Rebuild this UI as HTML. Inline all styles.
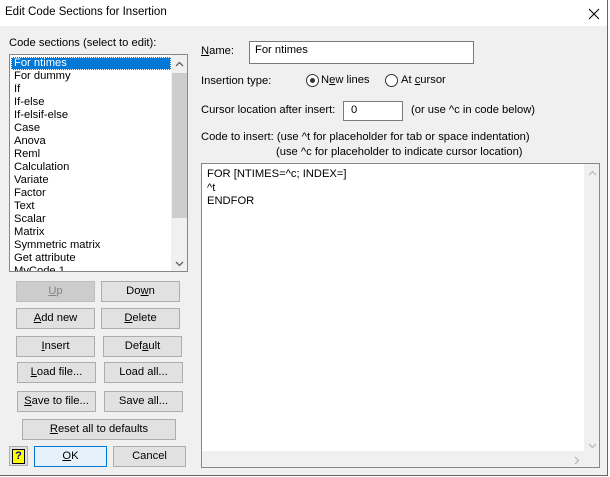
<!DOCTYPE html><html><head><style>
body{margin:0;width:610px;height:477px;background:#fff;font-family:"Liberation Sans",sans-serif;font-size:11.2px;color:#000;position:relative;overflow:hidden}
.a{position:absolute}
.win{left:0;top:0;width:607px;height:475px;background:#f0f0f0;border-right:1px solid #666;border-bottom:1px solid #666}
.title{left:0;top:0;width:607px;height:26px;background:#fff}
.btn{position:absolute;background:#e1e1e1;border:1px solid #adadad;box-sizing:border-box;text-align:center;line-height:19px}
.lb div{height:13px;line-height:13px;padding-left:3px}
.inp{position:absolute;background:#fff;border:1px solid #7a7a7a;box-sizing:border-box}
</style></head><body>
<div class="a win"></div>
<div class="a title"></div>
<div class="a" style="left:5px;top:6px;font-size:11.5px">Edit Code Sections for Insertion</div>
<svg class="a" style="left:588px;top:8px" width="12" height="12"><path d="M1 1L11 11M11 1L1 11" stroke="#000" stroke-width="1.1"/></svg>
<div class="a" style="left:9px;top:37px">Code sections (select to edit):</div>
<div class="a" style="left:9px;top:54px;width:179px;height:218px;background:#fff;border:1px solid #828790;box-sizing:border-box;overflow:hidden">
<div class="lb" style="position:absolute;left:1px;top:2px;width:160px">
<div style="background:#0078d7;color:#fff;outline:1px dotted #fff;outline-offset:-1px">For ntimes</div><div>For dummy</div><div>If</div><div>If-else</div><div>If-elsif-else</div><div>Case</div><div>Anova</div><div>Reml</div><div>Calculation</div><div>Variate</div><div>Factor</div><div>Text</div><div>Scalar</div><div>Matrix</div><div>Symmetric matrix</div><div>Get attribute</div><div>MyCode 1</div></div>
<div class="a" style="left:161px;top:0;width:17px;height:216px;background:#f0f0f0"></div>
<div class="a" style="left:162px;top:18px;width:15px;height:145px;background:#cdcdcd"></div>
<svg class="a" style="left:165px;top:6px" width="9" height="6"><path d="M1 5L4.5 1.5L8 5" stroke="#606060" stroke-width="1.3" fill="none"/></svg>
<svg class="a" style="left:165px;top:206px" width="9" height="6"><path d="M1 1L4.5 4.5L8 1" stroke="#606060" stroke-width="1.3" fill="none"/></svg>
</div>
<div class="btn" style="left:16px;top:281px;width:79px;height:21px;background:#cccccc;border-color:#bfbfbf;color:#838383"><u>U</u>p</div>
<div class="btn" style="left:101px;top:281px;width:79px;height:21px">Do<u>w</u>n</div>
<div class="btn" style="left:16px;top:308px;width:79px;height:21px"><u>A</u>dd new</div>
<div class="btn" style="left:101px;top:308px;width:79px;height:21px"><u>D</u>elete</div>
<div class="btn" style="left:16px;top:336px;width:79px;height:21px"><u>I</u>nsert</div>
<div class="btn" style="left:103px;top:336px;width:79px;height:21px">Def<u>a</u>ult</div>
<div class="btn" style="left:17px;top:362px;width:79px;height:21px"><u>L</u>oad file...</div>
<div class="btn" style="left:104px;top:362px;width:79px;height:21px">Load all...</div>
<div class="btn" style="left:17px;top:391px;width:79px;height:21px"><u>S</u>ave to file...</div>
<div class="btn" style="left:104px;top:391px;width:79px;height:21px">Save all...</div>
<div class="btn" style="left:22px;top:419px;width:154px;height:21px"><u>R</u>eset all to defaults</div>
<div class="btn" style="left:9px;top:446px;width:19px;height:20px"><span style="display:inline-block;width:11px;height:13px;background:#ff0;border:1px solid #000;line-height:13px;font-size:11px;font-weight:bold;color:#00a;margin-top:2px">?</span></div>
<div class="btn" style="left:34px;top:446px;width:73px;height:21px;background:#e5f1fb;border-color:#0078d7"><u>O</u>K</div>
<div class="btn" style="left:113px;top:446px;width:73px;height:21px">Cancel</div>
<div class="a" style="left:201px;top:45px"><u>N</u>ame:</div>
<div class="inp" style="left:249px;top:41px;width:225px;height:23px;padding:2px 0 0 5px">For ntimes</div>
<div class="a" style="left:201px;top:75px">Insertion type:</div>
<div class="a" style="left:306px;top:74px;width:11px;height:11px;border:1px solid #333;border-radius:50%;background:#fff"><div class="a" style="left:3px;top:3px;width:5px;height:5px;border-radius:50%;background:#333"></div></div>
<div class="a" style="left:321px;top:74px">N<u>e</u>w lines</div>
<div class="a" style="left:385px;top:74px;width:11px;height:11px;border:1px solid #333;border-radius:50%;background:#fff"></div>
<div class="a" style="left:401px;top:74px">At <u>c</u>ursor</div>
<div class="a" style="left:201px;top:104px">Cursor location after insert:</div>
<div class="inp" style="left:343px;top:101px;width:60px;height:20px;padding:2px 0 0 7px">0</div>
<div class="a" style="left:411px;top:104px">(or use ^c in code below)</div>
<div class="a" style="left:201px;top:131px">Code to insert: (use ^t for placeholder for tab or space indentation)</div>
<div class="a" style="left:276px;top:146px">(use ^c for placeholder to indicate cursor location)</div>
<div class="a" style="left:201px;top:163px;width:399px;height:305px;background:#f0f0f0;border:1px solid #828790;box-sizing:border-box">
<div class="a" style="left:0;top:0;width:382px;height:287px;background:#fff"></div>
<div class="a" style="left:5px;top:4px;line-height:13.5px">FOR [NTIMES=^c; INDEX=]<br>^t<br>ENDFOR</div>
<svg class="a" style="left:386px;top:6px" width="9" height="6"><path d="M1 5L4.5 1.5L8 5" stroke="#bbb" stroke-width="1.3" fill="none"/></svg>
<svg class="a" style="left:386px;top:279px" width="9" height="6"><path d="M1 1L4.5 4.5L8 1" stroke="#bbb" stroke-width="1.3" fill="none"/></svg>
<svg class="a" style="left:372px;top:292px" width="6" height="9"><path d="M1 1L4.5 4.5L1 8" stroke="#bbb" stroke-width="1.3" fill="none"/></svg>
</div>
</body></html>
